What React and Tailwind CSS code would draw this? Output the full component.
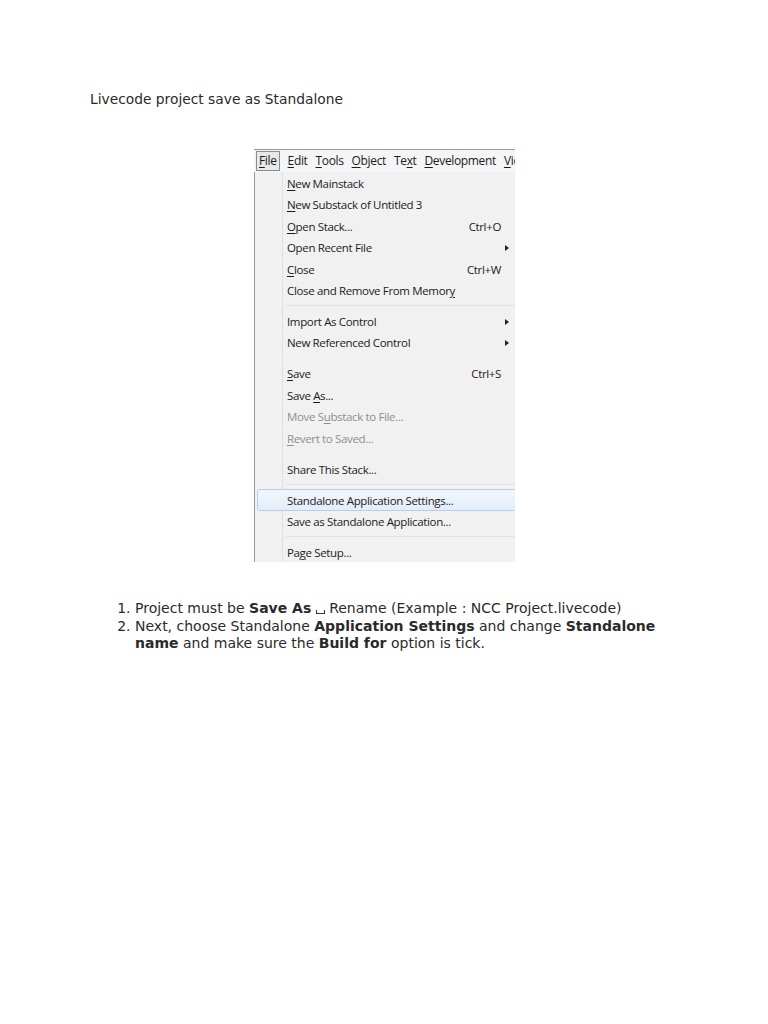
const menuFont = { fontFamily: '"Open Sans", "Noto Sans", sans-serif' };

function U({ children }) {
  return <span className="underline underline-offset-2 decoration-[1px]">{children}</span>;
}

function Row({ children, shortcut, arrow, disabled, active }) {
  return (
    <div
      className={`relative flex h-[21.4px] items-center pl-[32px] pr-[14px] ${
        disabled ? "text-[#8e8e8e]" : "text-[#1b1b1b]"
      }`}
    >
      {active && (
        <div className="absolute inset-y-[0px] left-[2px] right-[-4px] rounded-[3px] border border-[#b4d0f0] bg-gradient-to-b from-[#f2f7fd] to-[#e3edf9]" />
      )}
      <span className="relative">{children}</span>
      {shortcut && <span className="relative ml-auto">{shortcut}</span>}
      {arrow && (
        <span className="relative ml-auto mr-[-8px] h-0 w-0 border-y-[3.5px] border-l-[4px] border-y-transparent border-l-[#222]" />
      )}
    </div>
  );
}

function Sep({ line = true }) {
  return (
    <div className="flex h-[9.6px] items-center pl-[31px]">
      {line && <div className="h-[2px] w-full border-t border-[#e2e2e2] border-b-white" />}
    </div>
  );
}

function MenuShot() {
  return (
    <div
      className="ml-[254px] mt-[41px] h-[413px] w-[261px] overflow-hidden bg-[#f1f1f1] text-[11.5px] tracking-[-0.35px]"
      style={menuFont}
    >
      <div className="flex h-[23px] items-center gap-[8px] border-t border-[#9a9a9a] bg-[#f4f5f6] pl-[2px] text-[12px] text-[#1b1b1b] whitespace-nowrap">
        <span className="border border-[#8d8d8d] bg-[#e6e8ea] px-[2px] leading-[18px]">
          <U>F</U>ile
        </span>
        <span><U>E</U>dit</span>
        <span><U>T</U>ools</span>
        <span><U>O</U>bject</span>
        <span>Te<U>x</U>t</span>
        <span><U>D</U>evelopment</span>
        <span><U>V</U>iew</span>
      </div>
      <div className="relative h-full border-l border-[#9a9a9a] pt-[1px]">
        <div className="absolute bottom-0 left-[27px] top-0 w-[2px] border-l border-[#e0e0e0] border-r-white" />
        <Row><U>N</U>ew Mainstack</Row>
        <Row><U>N</U>ew Substack of Untitled 3</Row>
        <Row shortcut="Ctrl+O"><U>O</U>pen Stack...</Row>
        <Row arrow>Open Recent File</Row>
        <Row shortcut="Ctrl+W"><U>C</U>lose</Row>
        <Row>Close and Remove From Memor<U>y</U></Row>
        <Sep />
        <Row arrow>Import As Control</Row>
        <Row arrow>New Referenced Control</Row>
        <Sep line={false} />
        <Row shortcut="Ctrl+S"><U>S</U>ave</Row>
        <Row>Save <U>A</U>s...</Row>
        <Row disabled>Move S<U>u</U>bstack to File...</Row>
        <Row disabled><U>R</U>evert to Saved...</Row>
        <Sep line={false} />
        <Row>Share This Stack...</Row>
        <Sep />
        <Row active>Standalone Application Settings...</Row>
        <Row>Save as Standalone Application...</Row>
        <Sep />
        <Row>Pa<U>g</U>e Setup...</Row>
      </div>
    </div>
  );
}

export default function App() {
  return (
    <div
      className="min-h-[1024px] w-[768px] bg-white text-[14px] text-[#2a2a2a]"
      style={{ fontFamily: '"DejaVu Sans", sans-serif' }}
    >
      <div className="pl-[90px] pt-[91px] text-[13.8px] leading-[17px]">Livecode project save as Standalone</div>
      <MenuShot />
      <ol className="mt-[38px] list-decimal pl-[135px] pr-[100px] leading-[17.5px]">
        <li>
          Project must be <b>Save As</b>{" "}
          <span className="inline-block h-[4px] w-[9px] border border-t-0 border-[#333] align-[-1px]" /> Rename
          (Example : NCC Project.livecode)
        </li>
        <li>
          Next, choose Standalone <b>Application Settings</b> and change <b>Standalone name</b> and make
          sure the <b>Build for</b> option is tick.
        </li>
      </ol>
    </div>
  );
}
